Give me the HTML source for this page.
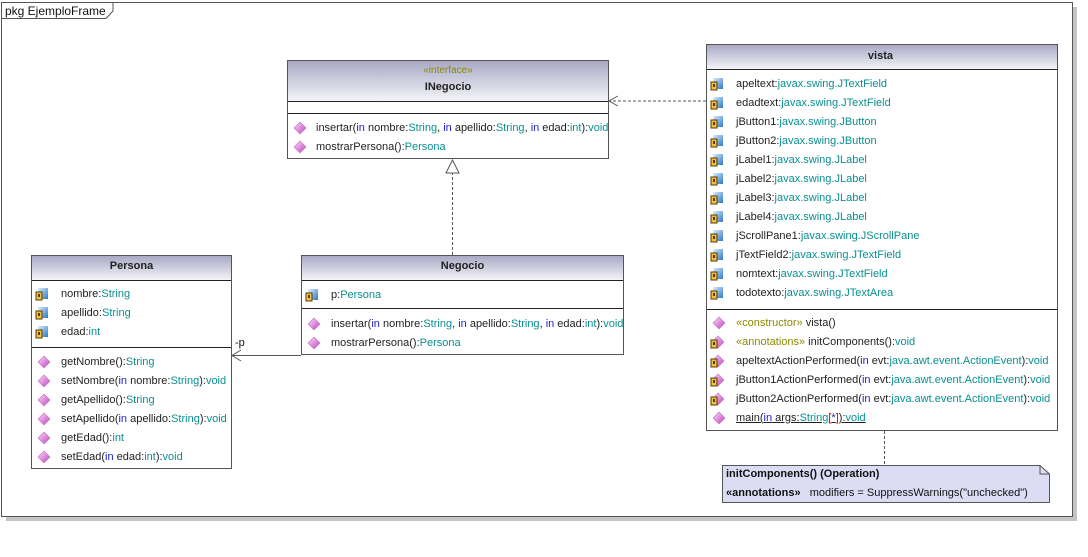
<!DOCTYPE html>
<html><head><meta charset="utf-8"><style>
*{margin:0;padding:0;box-sizing:border-box}
body{width:1088px;height:557px;background:#fff;position:relative;overflow:hidden;font-family:"Liberation Sans","DejaVu Sans",sans-serif;font-size:11px;color:#222}
.abs{position:absolute}
.box{position:absolute;border:1px solid #555;background:#fff}
.hd{background:linear-gradient(#a9a9c6,#f4f4f8);border-bottom:1px solid #222;text-align:center;font-weight:bold;font-size:11px}
.sep{position:absolute;left:0;right:0;border-top:1px solid #222}
.row{position:absolute;white-space:nowrap;height:14px;line-height:14px}
.t{color:#0a8f8f}.k{color:#2020d0}.s{color:#8a8a00}
.ic{position:absolute;width:14px;height:14px}
</style></head><body>
<svg class="abs" style="left:0;top:0" width="1088" height="557">
<defs>
<linearGradient id="a" x1="0" x2="1" y1="0" y2="1"><stop offset="0" stop-color="#dfefff"/><stop offset="1" stop-color="#2a78c8"/></linearGradient>
<linearGradient id="d" x1="0" x2="1" y1="0" y2="1"><stop offset="0" stop-color="#fbe0fb"/><stop offset="1" stop-color="#c040c0"/></linearGradient>
<symbol id="attr" viewBox="0 0 14 14"><rect x="3" y="1" width="10" height="11" fill="url(#a)"/><rect x="1" y="5" width="6" height="8" fill="#f0c040" stroke="#5a3a00"/><rect x="3" y="7" width="2" height="3" fill="#5a3a00"/></symbol>
<symbol id="op" viewBox="0 0 14 14"><path d="M7 1 L13 7 L7 13 L1 7Z" fill="url(#d)" stroke="#c070c0" stroke-width=".6"/></symbol>
<symbol id="opl" viewBox="0 0 14 14"><path d="M8 1 L14 7 L8 13 L2 7Z" fill="url(#d)" stroke="#c070c0" stroke-width=".6"/><rect x="1" y="5" width="6" height="8" fill="#f0c040" stroke="#5a3a00"/><rect x="3" y="7" width="2" height="3" fill="#5a3a00"/></symbol>
</defs>
<rect x="6" y="7" width="1071" height="514" fill="#c4c4c4"/>
<rect x="1.5" y="2.5" width="1071" height="514" fill="#fff" stroke="#555"/>
<path d="M1.5 18.5 H106 L113 11 V2.5" fill="none" stroke="#555"/>
<path d="M608 101 H706" stroke="#555" stroke-dasharray="3,2"/>
<path d="M618 96 L609 101 L618 106" fill="none" stroke="#555"/>
<path d="M452.5 255 V173" stroke="#555" stroke-dasharray="3,2"/>
<path d="M452.5 160 L446 173 H459Z" fill="#fff" stroke="#555"/>
<path d="M231 355.5 H301" stroke="#555"/>
<path d="M241 350 L232 355.5 L241 361" fill="none" stroke="#555"/>
<path d="M884.5 431 V465" stroke="#555" stroke-dasharray="3,2"/>
<path d="M722.5 465.5 H1040 L1049.5 474 V502.5 H722.5Z" fill="#dcdcf4" stroke="#555"/>
<path d="M1040 465.5 V474 H1049.5" fill="none" stroke="#555"/>
</svg>
<div class="abs" style="left:5px;top:4px;font-size:12px;color:#111">pkg EjemploFrame</div>

<!-- INegocio -->
<div class="box" style="left:287px;top:60px;width:322px;height:99px">
<div class="hd" style="height:41px;padding-top:4px"><div class="s" style="font-weight:normal;font-size:10px">«interface»</div><div style="margin-top:5px">INegocio</div></div>
<div class="sep" style="top:52px"></div>
</div>
<svg class="ic" style="left:293px;top:121px"><use href="#op"/></svg>
<div class="row" style="left:316px;top:121px">insertar(<span class="k">in</span> nombre:<span class="t">String</span>, <span class="k">in</span> apellido:<span class="t">String</span>, <span class="k">in</span> edad:<span class="t">int</span>):<span class="t">void</span></div>
<svg class="ic" style="left:293px;top:140px"><use href="#op"/></svg>
<div class="row" style="left:316px;top:140px">mostrarPersona():<span class="t">Persona</span></div>

<!-- vista -->
<div class="box" style="left:706px;top:44px;width:352px;height:387px">
<div class="hd" style="height:25px;line-height:22px;text-align:right;padding-right:164px">vista</div>
<div class="sep" style="top:264px"></div>
</div>
<svg class="ic" style="left:710px;top:77px"><use href="#attr"/></svg><div class="row" style="left:736px;top:77px">apeltext:<span class="t">javax.swing.JTextField</span></div>
<svg class="ic" style="left:710px;top:96px"><use href="#attr"/></svg><div class="row" style="left:736px;top:96px">edadtext:<span class="t">javax.swing.JTextField</span></div>
<svg class="ic" style="left:710px;top:115px"><use href="#attr"/></svg><div class="row" style="left:736px;top:115px">jButton1:<span class="t">javax.swing.JButton</span></div>
<svg class="ic" style="left:710px;top:134px"><use href="#attr"/></svg><div class="row" style="left:736px;top:134px">jButton2:<span class="t">javax.swing.JButton</span></div>
<svg class="ic" style="left:710px;top:153px"><use href="#attr"/></svg><div class="row" style="left:736px;top:153px">jLabel1:<span class="t">javax.swing.JLabel</span></div>
<svg class="ic" style="left:710px;top:172px"><use href="#attr"/></svg><div class="row" style="left:736px;top:172px">jLabel2:<span class="t">javax.swing.JLabel</span></div>
<svg class="ic" style="left:710px;top:191px"><use href="#attr"/></svg><div class="row" style="left:736px;top:191px">jLabel3:<span class="t">javax.swing.JLabel</span></div>
<svg class="ic" style="left:710px;top:210px"><use href="#attr"/></svg><div class="row" style="left:736px;top:210px">jLabel4:<span class="t">javax.swing.JLabel</span></div>
<svg class="ic" style="left:710px;top:229px"><use href="#attr"/></svg><div class="row" style="left:736px;top:229px">jScrollPane1:<span class="t">javax.swing.JScrollPane</span></div>
<svg class="ic" style="left:710px;top:248px"><use href="#attr"/></svg><div class="row" style="left:736px;top:248px">jTextField2:<span class="t">javax.swing.JTextField</span></div>
<svg class="ic" style="left:710px;top:267px"><use href="#attr"/></svg><div class="row" style="left:736px;top:267px">nomtext:<span class="t">javax.swing.JTextField</span></div>
<svg class="ic" style="left:710px;top:286px"><use href="#attr"/></svg><div class="row" style="left:736px;top:286px">todotexto:<span class="t">javax.swing.JTextArea</span></div>
<svg class="ic" style="left:712px;top:316px"><use href="#op"/></svg><div class="row" style="left:736px;top:316px"><span class="s">«constructor»</span> vista()</div>
<svg class="ic" style="left:710px;top:335px"><use href="#opl"/></svg><div class="row" style="left:736px;top:335px"><span class="s">«annotations»</span> initComponents():<span class="t">void</span></div>
<svg class="ic" style="left:710px;top:354px"><use href="#opl"/></svg><div class="row" style="left:736px;top:354px">apeltextActionPerformed(<span class="k">in</span> evt:<span class="t">java.awt.event.ActionEvent</span>):<span class="t">void</span></div>
<svg class="ic" style="left:710px;top:373px"><use href="#opl"/></svg><div class="row" style="left:736px;top:373px">jButton1ActionPerformed(<span class="k">in</span> evt:<span class="t">java.awt.event.ActionEvent</span>):<span class="t">void</span></div>
<svg class="ic" style="left:710px;top:392px"><use href="#opl"/></svg><div class="row" style="left:736px;top:392px">jButton2ActionPerformed(<span class="k">in</span> evt:<span class="t">java.awt.event.ActionEvent</span>):<span class="t">void</span></div>
<svg class="ic" style="left:712px;top:411px"><use href="#op"/></svg><div class="row" style="left:736px;top:411px;text-decoration:underline">main(<span class="k">in</span> args:<span class="t">String</span><span style="color:#c00">[</span><span class="k">*</span><span style="color:#c00">]</span>):<span class="t">void</span></div>

<!-- Persona -->
<div class="box" style="left:31px;top:255px;width:201px;height:214px">
<div class="hd" style="height:25px;line-height:20px">Persona</div>
<div class="sep" style="top:91px"></div>
</div>
<svg class="ic" style="left:35px;top:287px"><use href="#attr"/></svg><div class="row" style="left:61px;top:287px">nombre:<span class="t">String</span></div>
<svg class="ic" style="left:35px;top:306px"><use href="#attr"/></svg><div class="row" style="left:61px;top:306px">apellido:<span class="t">String</span></div>
<svg class="ic" style="left:35px;top:325px"><use href="#attr"/></svg><div class="row" style="left:61px;top:325px">edad:<span class="t">int</span></div>
<svg class="ic" style="left:37px;top:355px"><use href="#op"/></svg><div class="row" style="left:61px;top:355px">getNombre():<span class="t">String</span></div>
<svg class="ic" style="left:37px;top:374px"><use href="#op"/></svg><div class="row" style="left:61px;top:374px">setNombre(<span class="k">in</span> nombre:<span class="t">String</span>):<span class="t">void</span></div>
<svg class="ic" style="left:37px;top:393px"><use href="#op"/></svg><div class="row" style="left:61px;top:393px">getApellido():<span class="t">String</span></div>
<svg class="ic" style="left:37px;top:412px"><use href="#op"/></svg><div class="row" style="left:61px;top:412px">setApellido(<span class="k">in</span> apellido:<span class="t">String</span>):<span class="t">void</span></div>
<svg class="ic" style="left:37px;top:431px"><use href="#op"/></svg><div class="row" style="left:61px;top:431px">getEdad():<span class="t">int</span></div>
<svg class="ic" style="left:37px;top:450px"><use href="#op"/></svg><div class="row" style="left:61px;top:450px">setEdad(<span class="k">in</span> edad:<span class="t">int</span>):<span class="t">void</span></div>
<div class="row" style="left:235px;top:336px;color:#111">-p</div>

<!-- Negocio -->
<div class="box" style="left:301px;top:255px;width:323px;height:100px">
<div class="hd" style="height:25px;line-height:20px">Negocio</div>
<div class="sep" style="top:52px"></div>
</div>
<svg class="ic" style="left:305px;top:288px"><use href="#attr"/></svg><div class="row" style="left:331px;top:288px">p:<span class="t">Persona</span></div>
<svg class="ic" style="left:307px;top:317px"><use href="#op"/></svg><div class="row" style="left:331px;top:317px">insertar(<span class="k">in</span> nombre:<span class="t">String</span>, <span class="k">in</span> apellido:<span class="t">String</span>, <span class="k">in</span> edad:<span class="t">int</span>):<span class="t">void</span></div>
<svg class="ic" style="left:307px;top:336px"><use href="#op"/></svg><div class="row" style="left:331px;top:336px">mostrarPersona():<span class="t">Persona</span></div>

<!-- note -->
<div class="row" style="left:726px;top:467px;font-weight:bold;color:#111">initComponents() (Operation)</div>
<div class="row" style="left:726px;top:486px;color:#111"><b>«annotations»</b>&nbsp;&nbsp; modifiers = SuppressWarnings("unchecked")</div>
</body></html>
